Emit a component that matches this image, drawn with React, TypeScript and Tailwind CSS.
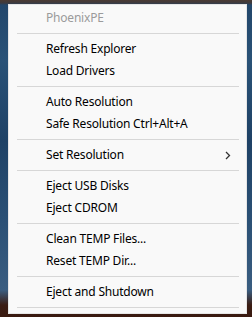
import React from "react";

type Item = { label: string; disabled?: boolean; arrow?: boolean } | "sep";

const items: Item[] = [
  { label: "PhoenixPE", disabled: true },
  "sep",
  { label: "Refresh Explorer" },
  { label: "Load Drivers" },
  "sep",
  { label: "Auto Resolution" },
  { label: "Safe Resolution Ctrl+Alt+A" },
  "sep",
  { label: "Set Resolution", arrow: true },
  "sep",
  { label: "Eject USB Disks" },
  { label: "Eject CDROM" },
  "sep",
  { label: "Clean TEMP Files..." },
  { label: "Reset TEMP Dir..." },
  "sep",
  { label: "Eject and Shutdown" },
  "sep",
];

export default function App() {
  return (
    <div
      className="w-[252px] h-[317px] overflow-hidden pt-[4px] pl-[8px] bg-[linear-gradient(180deg,#4b3b33_0px,#3d3a3e_3px,#23476b_5px,#2a5277_60px,#1f4266_140px,#2b5075_220px,#3a5d80_290px,#3b1d14_305px,#3a1a10_317px)]"
      style={{ fontFamily: '"Noto Sans", "Segoe UI", sans-serif' }}
    >
      <div className="w-[239px] h-[310px] bg-[#f9f9f9] border border-[#e6e6e6] pt-[2px] flex flex-col">
        {items.map((it, i) =>
          it === "sep" ? (
            <div key={i} className="h-[9px] flex items-center pl-[8px] pr-[7px]">
              <div className="h-px w-full bg-[#d7d7d7]" />
            </div>
          ) : (
            <div
              key={i}
              className={`h-[22px] flex items-center pl-[37px] pr-[14px] text-[12px] leading-none ${
                it.disabled ? "text-[#9b9b9b]" : "text-[#000000]"
              }`}
            >
              <span className="flex-1 tracking-[-0.2px]">{it.label}</span>
              {it.arrow && (
                <svg width="6" height="9" viewBox="0 0 6 9" className="mr-[1px]">
                  <path d="M1 1 L4.5 4.5 L1 8" fill="none" stroke="#333" strokeWidth="1.3" />
                </svg>
              )}
            </div>
          )
        )}
      </div>
    </div>
  );
}
